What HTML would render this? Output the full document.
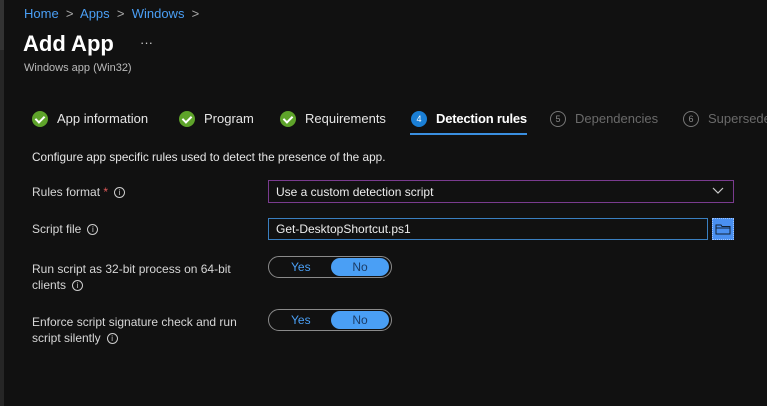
<!DOCTYPE html>
<html><head><style>
body{margin:0;width:767px;height:406px;background:#111111;font-family:"Liberation Sans",sans-serif;color:#e6e6e6;position:relative;overflow:hidden}
.a{position:absolute;white-space:nowrap}
.bc{color:#4a9ff5;font-size:13px}
.sep{color:#aaa}
.chk{position:absolute;width:16px;height:16px;border-radius:50%;background:#5ea32a}
.chk:after{content:"";position:absolute;left:5px;top:2.5px;width:4px;height:7px;border:solid #fff;border-width:0 2px 2px 0;transform:rotate(45deg)}
.num{position:absolute;width:14px;height:14px;border-radius:50%;border:1px solid #777;color:#888;font-size:9px;text-align:center;line-height:14px}
.tab{font-size:13px;top:111px}
.lbl{font-size:12px;color:#d6d6d6}
.info{display:inline-block;width:9px;height:9px;border:1px solid #ccc;border-radius:50%;font-size:8px;line-height:9px;text-align:center;vertical-align:1px;margin-left:6px;color:#ccc}
.tg{position:absolute;left:268px;width:122px;height:20px;border:1px solid #8a8a8a;border-radius:11px}
.tg .y{position:absolute;left:22px;top:3px;font-size:12px;color:#4a9ff5}
.tg .n{position:absolute;left:62px;top:1px;width:58px;height:18px;border-radius:9px;background:#4a9ff5;color:#1c3c66;font-size:12px;text-align:center;line-height:18px}
</style></head><body>
<div class="a" style="left:0;top:0;width:4px;height:406px;background:#262626"></div>
<div class="a" style="left:0;top:0;width:4px;height:50px;background:#333"></div>
<div class="a bc" style="left:24px;top:6px">Home <span class="sep">&nbsp;&gt;&nbsp;</span> Apps <span class="sep">&nbsp;&gt;&nbsp;</span> Windows <span class="sep">&nbsp;&gt;</span></div>
<div class="a" style="left:23px;top:31px;font-size:22px;font-weight:bold;color:#fff">Add App</div>
<div class="a" style="left:140px;top:35px;font-size:13px;color:#ccc">···</div>
<div class="a" style="left:24px;top:62px;font-size:11px;color:#bbb">Windows app (Win32)</div>

<div class="chk" style="left:32px;top:111px"></div><div class="a tab" style="left:57px">App information</div>
<div class="chk" style="left:179px;top:111px"></div><div class="a tab" style="left:204px">Program</div>
<div class="chk" style="left:280px;top:111px"></div><div class="a tab" style="left:305px">Requirements</div>
<div class="a" style="left:411px;top:111px;width:16px;height:16px;border-radius:50%;background:#1a7fd6;color:#fff;font-size:9px;text-align:center;line-height:16px">4</div>
<div class="a tab" style="left:436px;font-weight:bold;color:#fff;letter-spacing:-0.2px">Detection rules</div>
<div class="a" style="left:410px;top:133px;width:117px;height:2px;background:#3a8fe0"></div>
<div class="num" style="left:550px;top:111px">5</div><div class="a tab" style="left:575px;color:#6a6a6a">Dependencies</div>
<div class="num" style="left:683px;top:111px">6</div><div class="a tab" style="left:708px;color:#6a6a6a">Supersedence</div>

<div class="a" style="left:32px;top:150px;font-size:11.8px;color:#e6e6e6">Configure app specific rules used to detect the presence of the app.</div>

<div class="a lbl" style="left:32px;top:185px">Rules format <span style="color:#e05a5a">*</span><span class="info">i</span></div>
<div class="a" style="left:268px;top:180px;width:466px;height:23px;border:1px solid #7a3b8f;box-sizing:border-box"></div>
<div class="a" style="left:276px;top:185px;font-size:12px;color:#eee">Use a custom detection script</div>
<svg class="a" style="left:712px;top:187px" width="12" height="8"><path d="M1 1L6 6L11 1" stroke="#ccc" fill="none" stroke-width="1.2"/></svg>

<div class="a lbl" style="left:32px;top:222px">Script file<span class="info">i</span></div>
<div class="a" style="left:268px;top:218px;width:440px;height:22px;border:1px solid #3a7fc0;box-sizing:border-box"></div>
<div class="a" style="left:276px;top:222px;font-size:12px;color:#eee">Get-DesktopShortcut.ps1</div>
<div class="a" style="left:712px;top:218px;width:22px;height:22px;background:#4a90f0;border:1px dotted #9cc4ff;box-sizing:border-box"></div>
<svg class="a" style="left:715px;top:223px" width="16" height="12"><path d="M1 2H6L7 3.5H15V11H1Z M1 5H15" stroke="#123" fill="none" stroke-width="1"/></svg>

<div class="a lbl" style="left:32px;top:261px;line-height:16px">Run script as 32-bit process on 64-bit<br>clients<span class="info">i</span></div>
<div class="tg" style="top:256px"><span class="y">Yes</span><span class="n">No</span></div>
<div class="a lbl" style="left:32px;top:314px;line-height:16px">Enforce script signature check and run<br>script silently<span class="info">i</span></div>
<div class="tg" style="top:309px"><span class="y">Yes</span><span class="n">No</span></div>
</body></html>
